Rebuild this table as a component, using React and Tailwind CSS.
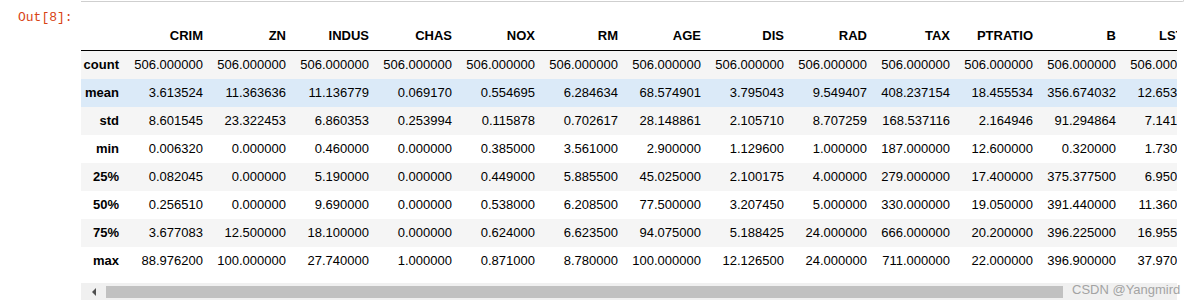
const columns = ['CRIM', 'ZN', 'INDUS', 'CHAS', 'NOX', 'RM', 'AGE', 'DIS', 'RAD', 'TAX', 'PTRATIO', 'B', 'LSTAT']

// describe() output of the Boston housing frame
const rows = [
  { name: 'count', bg: 'bg-[#f5f5f5]', values: ['506.000000', '506.000000', '506.000000', '506.000000', '506.000000', '506.000000', '506.000000', '506.000000', '506.000000', '506.000000', '506.000000', '506.000000', '506.000000'] },
  { name: 'mean', bg: 'bg-[#dbeaf8]', values: ['3.613524', '11.363636', '11.136779', '0.069170', '0.554695', '6.284634', '68.574901', '3.795043', '9.549407', '408.237154', '18.455534', '356.674032', '12.653063'] },
  { name: 'std', bg: 'bg-[#f5f5f5]', values: ['8.601545', '23.322453', '6.860353', '0.253994', '0.115878', '0.702617', '28.148861', '2.105710', '8.707259', '168.537116', '2.164946', '91.294864', '7.141062'] },
  { name: 'min', bg: 'bg-white', values: ['0.006320', '0.000000', '0.460000', '0.000000', '0.385000', '3.561000', '2.900000', '1.129600', '1.000000', '187.000000', '12.600000', '0.320000', '1.730000'] },
  { name: '25%', bg: 'bg-[#f5f5f5]', values: ['0.082045', '0.000000', '5.190000', '0.000000', '0.449000', '5.885500', '45.025000', '2.100175', '4.000000', '279.000000', '17.400000', '375.377500', '6.950000'] },
  { name: '50%', bg: 'bg-white', values: ['0.256510', '0.000000', '9.690000', '0.000000', '0.538000', '6.208500', '77.500000', '3.207450', '5.000000', '330.000000', '19.050000', '391.440000', '11.360000'] },
  { name: '75%', bg: 'bg-[#f5f5f5]', values: ['3.677083', '12.500000', '18.100000', '0.000000', '0.624000', '6.623500', '94.075000', '5.188425', '24.000000', '666.000000', '20.200000', '396.225000', '16.955000'] },
  { name: 'max', bg: 'bg-white', values: ['88.976200', '100.000000', '27.740000', '1.000000', '0.871000', '8.780000', '100.000000', '12.126500', '24.000000', '711.000000', '22.000000', '396.900000', '37.970000'] },
]

const App = () => {
  return (
    <div className="w-[1194px] h-[306px] bg-white overflow-hidden relative font-['Liberation_Sans',Arial,sans-serif] text-[13px] text-black">
      {/* bottom edge of the previous input cell */}
      <div className="ml-[81px] w-[1103px] h-[2px] border-b border-r border-[#cfcfcf] rounded-br-[2px]" />

      <div className="flex">
        {/* prompt */}
        <div className="w-[81px] shrink-0 pl-[18px] pt-[8px] font-['Liberation_Mono',monospace] text-[13px] leading-[16px] text-[#d84315]">
          Out[8]:
        </div>

        {/* output area */}
        <div className="w-[1096px] shrink-0 pt-[20px]">
          <div className="overflow-hidden">
            <table className="border-collapse table-fixed w-[1124px]">
              <thead>
                <tr className="h-[28px] border-b border-black">
                  <th className="w-[45px] p-0" />
                  {columns.map((col) => (
                    <th key={col} className="w-[83px] p-0 pr-[6px] text-right font-bold leading-[28px] whitespace-nowrap">
                      {col}
                    </th>
                  ))}
                </tr>
              </thead>
              <tbody>
                {rows.map((row) => (
                  <tr key={row.name} className={`h-[28px] ${row.bg}`}>
                    <th className="p-0 pr-[7px] text-right font-bold leading-[28px] whitespace-nowrap">{row.name}</th>
                    {row.values.map((v, i) => (
                      <td key={i} className="p-0 pr-[6px] text-right leading-[28px] whitespace-nowrap">
                        {v}
                      </td>
                    ))}
                  </tr>
                ))}
              </tbody>
            </table>
          </div>

          {/* horizontal scrollbar */}
          <div className="mt-[8px] h-[17px] bg-[#f0f0f0] flex items-center">
            <div className="w-[25px] h-full flex items-center justify-center">
              <div className="w-0 h-0 border-y-[4px] border-y-transparent border-r-[4px] border-r-[#505050]" />
            </div>
            <div className="w-[957px] h-[12px] bg-[#c1c1c1]" />
          </div>
        </div>
      </div>

      {/* watermark */}
      <div className="absolute left-[1072px] top-[281px] text-[13px] leading-[18px] text-[#a3a3a3] whitespace-nowrap">
        CSDN @Yangmird
      </div>
    </div>
  )
}

export default App
